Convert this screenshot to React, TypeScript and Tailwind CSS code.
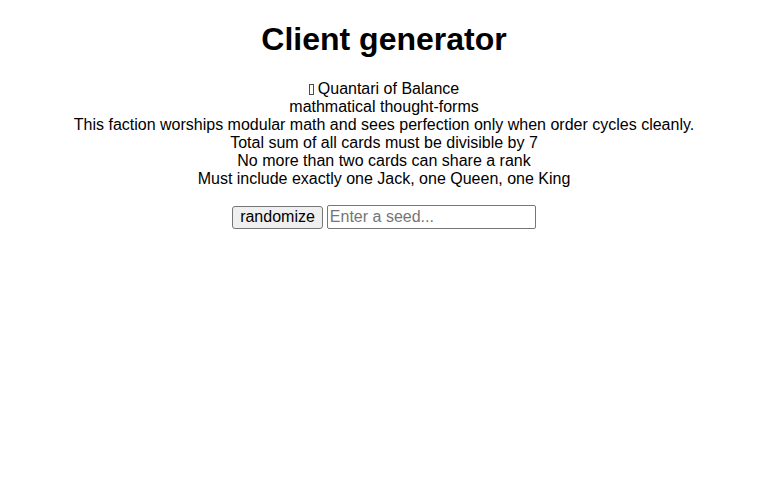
import React, { useState } from 'react';

const rules = [
  'Total sum of all cards must be divisible by 7',
  'No more than two cards can share a rank',
  'Must include exactly one Jack, one Queen, one King',
];

export default function App() {
  const [seed, setSeed] = useState('');

  return (
    <div className="min-h-screen bg-white text-black text-center text-base leading-[18px] font-['Liberation_Sans',Arial,sans-serif]">
      <h1 className="pt-[21px] pb-[22px] text-[32px] leading-[37px] font-bold">Client generator</h1>

      <div>
        <div>
          <span className="inline-block w-[5px] h-[11px] border border-black/70 mr-[4px] align-[-1px]" />
          Quantari of Balance
        </div>
        <div>mathmatical thought-forms</div>
        <div>This faction worships modular math and sees perfection only when order cycles cleanly.</div>
        {rules.map((r) => (
          <div key={r}>{r}</div>
        ))}
      </div>

      <div className="mt-[17px] flex justify-center items-center gap-[4px]">
        <button
          type="button"
          onClick={() => setSeed(String(Math.floor(Math.random() * 1e6)))}
          className="h-[23px] px-[7px] bg-[#efefef] border border-[#767676] rounded-[3px] text-base leading-[18px]"
        >
          randomize
        </button>
        <input
          value={seed}
          onChange={(e) => setSeed(e.target.value)}
          placeholder="Enter a seed..."
          className="w-[209px] h-[24px] px-[2px] border border-[#767676] rounded-[2px] text-base placeholder:text-[#757575]"
        />
      </div>
    </div>
  );
}
